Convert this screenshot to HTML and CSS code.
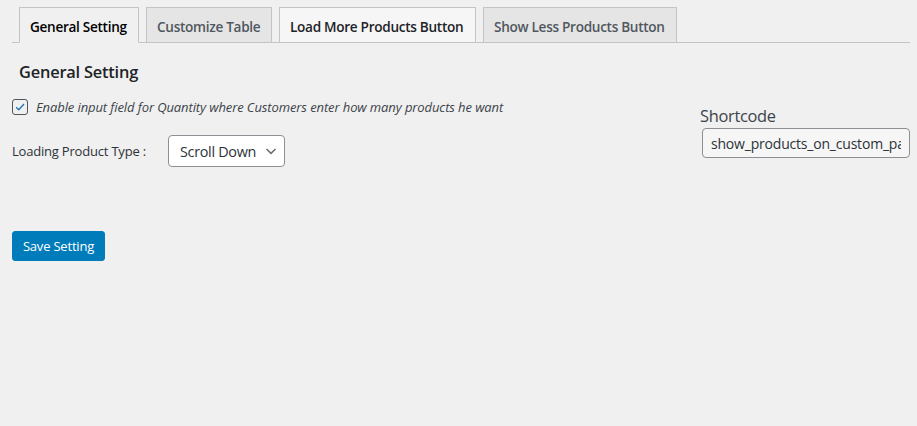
FILE: index.html
```html
<!DOCTYPE html>
<html lang="en">
<head>
  <meta charset="UTF-8">
  <meta name="viewport" content="width=device-width, initial-scale=1.0">
  <title> General Setting </title>
  <link rel="stylesheet" href="styles.css">
</head>
<body>
  <div class="wrap">
    <h2 class="nav-tab-wrapper">
      <a class="nav-tab nav-tab-active" href="#">General Setting</a>
      <a class="nav-tab" href="#">Customize Table</a>
      <a class="nav-tab nav-tab-light" href="#">Load More Products Button</a>
      <a class="nav-tab" href="#">Show Less Products Button</a>
    </h2>

    <h3 class="title">General Setting</h3>

    <div class="content">
      <div class="settings">
        <label class="check-row">
          <span class="checkbox">
            <svg width="12" height="12" viewBox="0 0 12 12">
              <path d="M2.2 6.3 L4.8 8.8 L10 3" fill="none" stroke="#2271b1" stroke-width="1.3"/>
            </svg>
          </span>
          <em>Enable input field for Quantity where Customers enter how many products he want</em>
        </label>

        <div class="field-row">
          <span class="field-label">Loading Product Type :</span>
          <div class="select">
            <span>Scroll Down</span>
            <svg width="12" height="12" viewBox="0 0 12 12">
              <path d="M1.5 4 L6 8.3 L10.5 4" fill="none" stroke="#6b7075" stroke-width="1.6"/>
            </svg>
          </div>
        </div>
      </div>

      <div class="shortcode">
        <p>Shortcode</p>
        <input class="shortcode-input" type="text" readonly value="show_products_on_custom_page">
      </div>
    </div>

    <button class="button-primary">Save Setting</button>
  </div>
</body>
</html>
```

FILE: styles.css
```css
* {
  margin: 0;
  padding: 0;
  box-sizing: border-box;
}

body {
  height: 426px;
  background-color: #f0f0f0;
  color: #3c434a;
  font-family: "Open Sans", "Noto Sans", sans-serif;
  font-size: 13px;
}

.wrap {
  padding: 7px 7px 0 12px;
}

.nav-tab-wrapper {
  display: flex;
  gap: 7px;
  padding-left: 7px;
  border-bottom: 1px solid #c3c4c7;
}

.nav-tab {
  display: block;
  height: 36px;
  margin-bottom: -1px;
  padding: 2px 10px 0;
  line-height: 34px;
  color: #50575e;
  font-size: 13.6px;
  font-weight: 600;
  letter-spacing: -0.3px;
  text-decoration: none;
  white-space: nowrap;
  background-color: #e5e5e5;
  border: 1px solid #c3c4c7;
}

.nav-tab:nth-child(1) { width: 120px; }
.nav-tab:nth-child(2) { width: 126px; }
.nav-tab:nth-child(3) { width: 197px; }
.nav-tab:nth-child(4) { width: 194px; }

.nav-tab-active {
  color: #000;
  background-color: #f0f0f0;
  border-bottom-color: #f0f0f0;
}

.nav-tab-light {
  color: #1d2327;
  background-color: #f6f6f6;
}

.title {
  margin: 17px 0 0 7px;
  color: #1d2327;
  font-size: 16.4px;
  font-weight: 600;
  letter-spacing: -0.2px;
  line-height: 24px;
}

.content {
  display: flex;
  justify-content: space-between;
}

.check-row {
  display: flex;
  align-items: center;
  gap: 8px;
  margin-top: 14px;
}

.checkbox {
  display: flex;
  align-items: center;
  justify-content: center;
  width: 16px;
  height: 16px;
  background-color: #f0f0f0;
  border: 1px solid #50575e;
  border-radius: 3px;
}

.check-row em {
  color: #3c434a;
  font-size: 13px;
  letter-spacing: -0.1px;
}

.field-row {
  display: flex;
  align-items: center;
  margin-top: 19px;
}

.field-label {
  width: 156px;
  color: #2c3338;
  font-size: 13px;
  letter-spacing: -0.2px;
}

.select {
  display: flex;
  align-items: center;
  justify-content: space-between;
  width: 117px;
  height: 32px;
  padding: 0 7px 0 11px;
  color: #2c3338;
  font-size: 14.4px;
  letter-spacing: -0.3px;
  background-color: #fff;
  border: 1px solid #8c8f94;
  border-radius: 4px;
}

.shortcode {
  width: 210px;
  margin-top: 21px;
}

.shortcode p {
  color: #3c434a;
  font-size: 16.4px;
  letter-spacing: -0.3px;
  line-height: 22px;
}

.shortcode-input {
  display: block;
  width: 208px;
  height: 30px;
  margin: 1px 0 0 2px;
  padding: 0 8px;
  color: #2c3338;
  font-family: "Open Sans", "Noto Sans", sans-serif;
  font-size: 14px;
  letter-spacing: -0.2px;
  background-color: #f6f6f6;
  border: 1px solid #8c8f94;
  border-radius: 4px;
  outline: none;
}

.button-primary {
  display: block;
  margin-top: 64px;
  width: 93px;
  height: 30px;
  color: #fff;
  font-family: "Open Sans", "Noto Sans", sans-serif;
  font-size: 13px;
  letter-spacing: -0.2px;
  background-color: #007cba;
  border: 1px solid #007cba;
  border-radius: 3px;
}
```
